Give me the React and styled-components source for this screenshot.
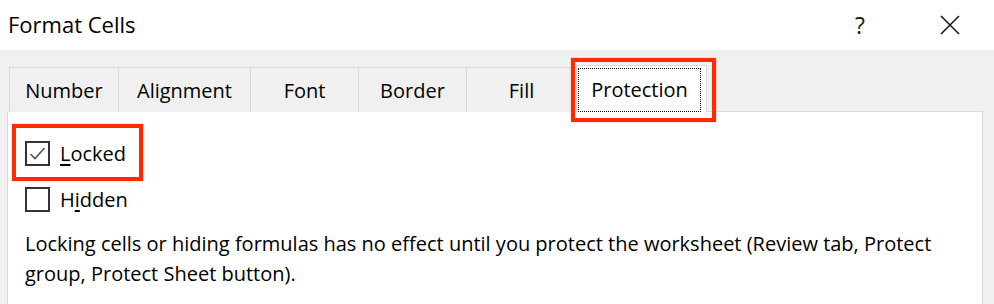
import React from 'react';
import styled, { createGlobalStyle } from 'styled-components';

const GlobalStyle = createGlobalStyle`
    html, body {
        margin: 0;
        padding: 0;
        background: #f0f0f0;
    }
    body {
        font-family: "Open Sans", "Noto Sans", "Liberation Sans", sans-serif;
        color: #000;
    }
`;

const Dialog = styled.div`
    width: 994px;
    height: 304px;
    display: flex;
    flex-direction: column;
    background: #f0f0f0;
    overflow: hidden;
`;

const TitleBar = styled.div`
    height: 50px;
    flex: none;
    display: flex;
    align-items: center;
    background: #fff;
    padding-left: 8px;
`;

const Title = styled.div`
    flex: 1;
    font-size: 22px;
    margin-top: -3px;
`;

const TitleButton = styled.button`
    width: 44px;
    height: 40px;
    border: none;
    background: none;
    padding: 0;
    display: flex;
    align-items: center;
    justify-content: center;
    font-family: inherit;
    font-size: 23px;
    color: #1a1a1a;
    margin-right: ${(p) => p.gap || 0}px;
`;

const Body = styled.div`
    flex: 1;
    display: flex;
    flex-direction: column;
    padding: 15px 11px 0 7px;
`;

const TabRow = styled.div`
    display: flex;
    align-items: flex-end;
    padding-left: 2px;
    height: 47px;
    position: relative;
    z-index: 1;
    margin-bottom: -1px;
`;

const Tab = styled.div`
    position: relative;
    width: ${(p) => p.w}px;
    height: ${(p) => (p.active ? 47 : 45)}px;
    box-sizing: border-box;
    display: flex;
    align-items: ${(p) => (p.active ? 'flex-start' : 'center')};
    justify-content: ${(p) => (p.active ? 'flex-start' : 'center')};
    font-size: 20px;
    background: ${(p) => (p.active ? '#fff' : '#f0f0f0')};
    border-top: 1px solid #d9d9d9;
    border-left: 1px solid #d9d9d9;
    border-right: ${(p) => (p.last ? '1px solid #d9d9d9' : 'none')};
    padding-top: ${(p) => (p.active ? 0 : 1)}px;
`;

const FocusRing = styled.span`
    display: flex;
    align-items: center;
    justify-content: center;
    border: 1px dotted #000;
    margin: 2px 0 0 1px;
    width: 123px;
    height: 44px;
    padding-bottom: 1px;
    box-sizing: border-box;
`;

// red annotation frame drawn over a control
const Highlight = styled.div`
    position: absolute;
    top: ${(p) => p.t}px;
    left: ${(p) => p.l}px;
    right: ${(p) => p.r}px;
    bottom: ${(p) => p.b}px;
    border: 4px solid #ff2a00;
    box-shadow: 0 0 1px #ff6a4a;
    pointer-events: none;
    z-index: 2;
`;

const Panel = styled.div`
    flex: 1;
    background: #fff;
    border: 1px solid #d9d9d9;
    border-bottom: none;
    padding: 18px 16px 0 17px;
`;

const CheckRow = styled.label`
    position: relative;
    display: flex;
    align-items: center;
    gap: 10px;
    height: 46px;
    width: max-content;
    font-size: 20px;
`;

const Box = styled.span`
    width: 25px;
    height: 25px;
    box-sizing: border-box;
    border: 2px solid #333;
    background: #fff;
    display: flex;
    align-items: center;
    justify-content: center;
`;

const Key = styled.u`
    text-decoration-thickness: 2px;
    text-underline-offset: 3px;
`;

const Note = styled.p`
    margin: 7px 0 0;
    font-size: 20px;
    line-height: 30px;
`;

const tabs = [
    { label: 'Number', w: 109 },
    { label: 'Alignment', w: 132 },
    { label: 'Font', w: 108 },
    { label: 'Border', w: 108 },
    { label: 'Fill', w: 110 },
    { label: 'Protection', w: 131, active: true },
];

const Check = () => (
    <svg width="19" height="19" viewBox="0 0 19 19">
        <polyline points="2.5,10 7,14.5 16.5,4" fill="none" stroke="#555" strokeWidth="1.6" />
    </svg>
);

const CloseIcon = () => (
    <svg width="20" height="20" viewBox="0 0 20 20">
        <path d="M1 1 L19 19 M19 1 L1 19" stroke="#1a1a1a" strokeWidth="1.6" />
    </svg>
);

export default function App() {
    return (
        <Dialog>
            <GlobalStyle />
            <TitleBar>
                <Title>Format Cells</Title>
                <TitleButton gap={46}>?</TitleButton>
                <TitleButton gap={22}>
                    <CloseIcon />
                </TitleButton>
            </TitleBar>
            <Body>
                <TabRow>
                    {tabs.map((t, i) => (
                        <Tab key={t.label} w={t.w} active={t.active} last={i === tabs.length - 1}>
                            {t.active ? <FocusRing>{t.label}</FocusRing> : t.label}
                            {t.active && <Highlight t={-8} l={-6} r={-10} b={-10} />}
                        </Tab>
                    ))}
                </TabRow>
                <Panel>
                    <CheckRow>
                        <Box>
                            <Check />
                        </Box>
                        <span>
                            <Key>L</Key>ocked
                        </span>
                        <Highlight t={-6} l={-13} r={-17} b={-5} />
                    </CheckRow>
                    <CheckRow>
                        <Box />
                        <span>
                            H<Key>i</Key>dden
                        </span>
                    </CheckRow>
                    <Note>
                        Locking cells or hiding formulas has no effect until you protect the worksheet (Review tab, Protect
                        <br />
                        group, Protect Sheet button).
                    </Note>
                </Panel>
            </Body>
        </Dialog>
    );
}
